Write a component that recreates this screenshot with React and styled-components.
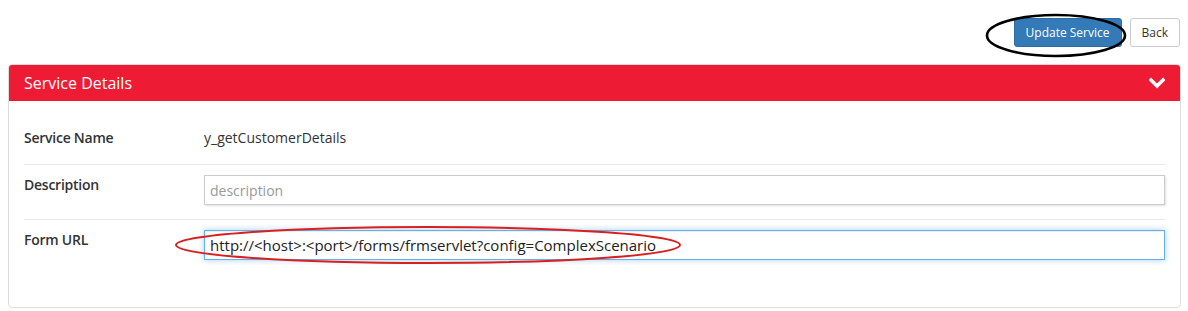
import React from "react";
import styled, { createGlobalStyle } from "styled-components";

const Global = createGlobalStyle`
  html, body { margin: 0; padding: 0; background: #fff; }
  body { font-family: "Open Sans", "Liberation Sans", Arial, sans-serif; color: #333; }
  * { box-sizing: border-box; }
`;

const Page = styled.div`
  position: relative;
  width: 1188px;
  height: 311px;
  padding: 18px 7px 0 8px;
`;

const Toolbar = styled.div`
  display: flex;
  justify-content: flex-end;
  gap: 8px;
  padding-right: 1px;
`;

const Button = styled.button`
  font-family: inherit;
  font-size: 12px;
  line-height: 18px;
  height: 29px;
  padding: 4px 11px;
  border-radius: 3px;
  border: 1px solid ${(p) => (p.$primary ? "#2e6da4" : "#ccc")};
  background: ${(p) => (p.$primary ? "#337ab7" : "#fff")};
  color: ${(p) => (p.$primary ? "#fff" : "#333")};
  cursor: pointer;
`;

const Panel = styled.section`
  margin-top: 17px;
  border: 1px solid #ddd;
  border-radius: 4px;
  overflow: hidden;
  height: 244px;
`;

const Heading = styled.header`
  display: flex;
  align-items: center;
  justify-content: space-between;
  height: 36px;
  padding: 0 15px 1px;
  background: #ee1b34;
  color: #fff;
  font-size: 16px;
`;

const Body = styled.div`
  padding: 17px 15px 0 15px;
`;

const Row = styled.div`
  display: grid;
  grid-template-columns: 180px 1fr;
  align-items: start;
  padding: 10px 0 14px;
  border-top: ${(p) => (p.$first ? "none" : "1px solid #e7e7e7")};
`;

const Label = styled.div`
  font-size: 14px;
  font-weight: 600;
  letter-spacing: -0.25px;
  line-height: 20px;
`;

const Value = styled.div`
  font-size: 14px;
  line-height: 20px;
  min-height: 22px;
`;

const Input = styled.input`
  width: 100%;
  height: 30px;
  font-family: inherit;
  font-size: ${(p) => (p.$focus ? "15px" : "14px")};
  color: #222;
  padding: 4px 5px;
  border: 1px solid ${(p) => (p.$focus ? "#66afe9" : "#ccc")};
  border-radius: 0;
  outline: none;
  box-shadow: ${(p) =>
    p.$focus
      ? "inset 0 1px 1px rgba(0,0,0,.075), 0 0 6px rgba(102,175,233,.6)"
      : "1px 1px 2px rgba(0,0,0,.12)"};
  &::placeholder { color: #999; }
`;

const Mark = styled.svg`
  position: absolute;
  pointer-events: none;
  overflow: visible;
`;

export default function App() {
  return (
    <>
      <Global />
      <Page>
        <Toolbar>
          <Button $primary>Update Service</Button>
          <Button>Back</Button>
        </Toolbar>
        <Panel>
          <Heading>
            <span>Service Details</span>
            <svg width="16" height="12" viewBox="0 0 16 12">
              <polyline points="2,3 8,9 14,3" fill="none" stroke="#fff" strokeWidth="3.4" strokeLinecap="square" />
            </svg>
          </Heading>
          <Body>
            <Row $first>
              <Label>Service Name</Label>
              <Value>y_getCustomerDetails</Value>
            </Row>
            <Row>
              <Label>Description</Label>
              <Input placeholder="description" readOnly />
            </Row>
            <Row>
              <Label>Form URL</Label>
              <Input $focus defaultValue="http://<host>:<port>/forms/frmservlet?config=ComplexScenario" />
            </Row>
          </Body>
        </Panel>
        <Mark style={{ left: 986, top: 14 }} width="142" height="44" viewBox="0 0 142 44">
          <ellipse cx="70" cy="21.5" rx="69" ry="20.5" fill="none" stroke="#000" strokeWidth="2.6" />
        </Mark>
        <Mark style={{ left: 175, top: 226 }} width="506" height="40" viewBox="0 0 506 40">
          <ellipse cx="253" cy="19" rx="252" ry="18" fill="none" stroke="#d9201f" strokeWidth="2" />
        </Mark>
      </Page>
    </>
  );
}
